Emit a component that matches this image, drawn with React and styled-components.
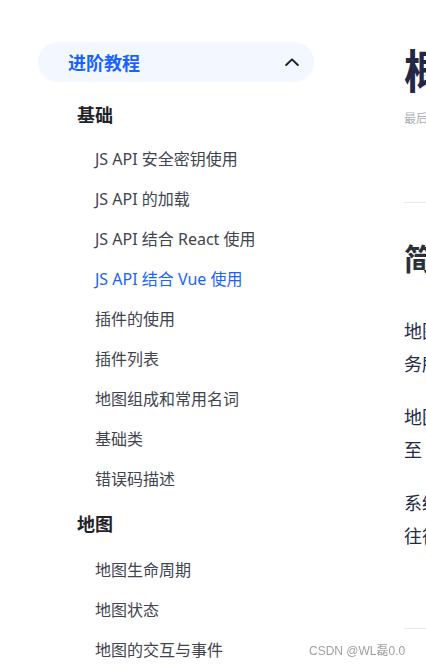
import styled, { createGlobalStyle } from "styled-components";

const GlobalStyle = createGlobalStyle`
  html, body {
    margin: 0;
    padding: 0;
    background: #ffffff;
    overflow: hidden;
  }
  body {
    font-family: "Noto Sans", "Noto Sans CJK SC", sans-serif;
  }
`;

const basics = [
  "JS API 安全密钥使用",
  "JS API 的加载",
  "JS API 结合 React 使用",
  "JS API 结合 Vue 使用",
  "插件的使用",
  "插件列表",
  "地图组成和常用名词",
  "基础类",
  "错误码描述",
];

const mapItems = ["地图生命周期", "地图状态", "地图的交互与事件"];

const paragraphs = [
  [
    "地图 JS API 2.0 是高德开放平台免费提供的第四代 Web 地图渲染引擎，",
    "务所需的地图展示、交互、覆盖物绘制、数据可视化等能力。",
  ],
  [
    "地图 JS API 2.0 以 WebGL 为主要绘图手段，性能和渲染效果大幅提升，",
    "至 3D 地图视图、自定义图层与海量点展示等丰富的场景。",
  ],
  [
    "系统中提供了丰富的插件与服务接口，开发者可以根据自身需求按需加载，",
    "往往只需要少量代码即可搭建一个完整的地图应用。",
  ],
];

function ChevronUp() {
  return (
    <svg width="14" height="8" viewBox="0 0 14 8" fill="none">
      <path
        d="M1.2 7 L7 1.4 L12.8 7"
        stroke="#1f2329"
        strokeWidth="2"
        strokeLinecap="round"
        strokeLinejoin="round"
      />
    </svg>
  );
}

function App() {
  return (
    <>
      <GlobalStyle />
      <Page>
        <Sidebar>
          <Section>
            <span>进阶教程</span>
            <ChevronUp />
          </Section>
          <GroupTitle $first>基础</GroupTitle>
          {basics.map((item) => (
            <Item key={item} $active={item === "JS API 结合 Vue 使用"}>
              {item}
            </Item>
          ))}
          <GroupTitle>地图</GroupTitle>
          {mapItems.map((item) => (
            <Item key={item}>{item}</Item>
          ))}
        </Sidebar>
        <Content>
          <Title>概述</Title>
          <Updated>最后更新时间: 2023年03月15日</Updated>
          <Divider $top={73} />
          <Heading>简介</Heading>
          {paragraphs.map((lines, i) => (
            <Paragraph key={i}>
              {lines[0]}
              <br />
              {lines[1]}
            </Paragraph>
          ))}
          <Divider $top={75} />
        </Content>
      </Page>
      <Watermark>CSDN @WL磊0.0</Watermark>
    </>
  );
}

const Page = styled.div`
  display: flex;
  width: 1200px;
  height: 668px;
`;

const Sidebar = styled.nav`
  width: 276px;
  flex-shrink: 0;
  padding: 42px 0 0 38px;
`;

const Section = styled.div`
  height: 40px;
  border-radius: 20px;
  background: #f3f7ff;
  display: flex;
  align-items: center;
  justify-content: space-between;
  padding: 0 15px 0 30px;
  font-size: 18px;
  font-weight: 700;
  color: #1a62ff;
`;

const GroupTitle = styled.div`
  height: 40px;
  line-height: 40px;
  margin: ${(p) => (p.$first ? "13px 0 4px" : "5px 0 6px")};
  padding-left: 39px;
  font-size: 18px;
  font-weight: 700;
  color: #1f2329;
`;

const Item = styled.div`
  height: 40px;
  line-height: 40px;
  padding-left: 57px;
  font-size: 16px;
  color: ${(p) => (p.$active ? "#1a62ff" : "#40444f")};
  white-space: nowrap;
`;

const Content = styled.main`
  margin-left: 90px;
  width: 700px;
  flex-shrink: 0;
  padding-top: 42px;
`;

const Title = styled.h1`
  margin: 0;
  font-size: 46px;
  line-height: 56px;
  font-weight: 700;
  color: #222845;
`;

const Updated = styled.div`
  margin-top: 11px;
  font-size: 12px;
  line-height: 20px;
  color: #a9adb6;
`;

const Divider = styled.hr`
  margin: ${(p) => p.$top}px 0 0;
  border: none;
  border-top: 1px solid #e8e9ec;
`;

const Heading = styled.h2`
  margin: 36px 0 0;
  font-size: 30px;
  line-height: 40px;
  font-weight: 700;
  color: #2b2f36;
`;

const Paragraph = styled.p`
  margin: 36px 0 0;
  font-size: 18px;
  line-height: 33px;
  color: #1f2a44;
  white-space: nowrap;
  & + & {
    margin-top: 20px;
  }
`;

const Watermark = styled.div`
  position: fixed;
  left: 309px;
  top: 642px;
  font-size: 12px;
  line-height: 18px;
  color: #a0a0a0;
  font-family: "Liberation Sans", "Noto Sans CJK SC", sans-serif;
  white-space: nowrap;
`;

export default App;
